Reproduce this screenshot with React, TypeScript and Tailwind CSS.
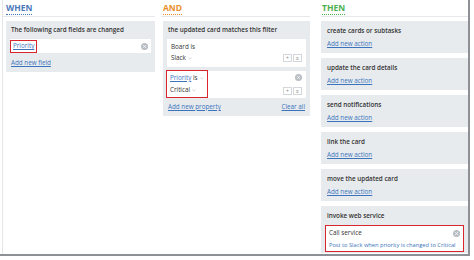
import type { ReactNode } from "react";

const link = "text-[#3b74bd] underline decoration-[0.5px] underline-offset-[1px]";

function ClearIcon({ className = "" }: { className?: string }) {
  return (
    <svg viewBox="0 0 10 10" className={`w-[7px] h-[7px] shrink-0 ${className}`}>
      <circle cx="5" cy="5" r="5" fill="#b9bec4" />
      <path d="M3.2 3.2 L6.8 6.8 M6.8 3.2 L3.2 6.8" stroke="#fff" strokeWidth="1.2" />
    </svg>
  );
}

function Caret() {
  return (
    <svg viewBox="0 0 6 4" className="inline-block w-[4px] h-[3px] ml-[2px] align-middle">
      <path d="M0.5 0.5 L3 3 L5.5 0.5" fill="none" stroke="#b0b4b9" strokeWidth="0.8" />
    </svg>
  );
}

function Header({ label, color, dots, pad }: { label: string; color: string; dots: string; pad: string }) {
  return (
    <div className={`h-[17px] border-b border-[#e6e8eb] pt-[3px] ${pad}`}>
      <div className={`inline-block font-bold text-[8.5px] leading-[10px] ${color}`}>
        {label}
        <div className={`border-b border-dotted ${dots} mt-[1px]`} />
      </div>
    </div>
  );
}

function Box({ title, children }: { title: string; children: ReactNode }) {
  return (
    <div className="bg-[#e8ebee] px-[4px] pt-[5px] pb-[5px]">
      <div className="font-semibold text-[#333] leading-[8px] mb-[5px] px-[1px]">{title}</div>
      {children}
    </div>
  );
}

function SmallBtns() {
  return (
    <div className="flex gap-px">
      <span className="w-[9px] h-[8px] border border-[#d3d7db] bg-white text-[5px] leading-[5px] text-[#888] flex items-center justify-center">+</span>
      <span className="w-[9px] h-[8px] border border-[#d3d7db] bg-white text-[5px] leading-[5px] text-[#888] flex items-center justify-center">≡</span>
    </div>
  );
}

function ActionBox({ title }: { title: string }) {
  return (
    <div className="bg-[#e8ebee] h-[32px] px-[6px] pt-[6px]">
      <div className="text-[#333] font-semibold leading-[8px]">{title}</div>
      <div className={`${link} leading-[8px] mt-[5px]`}>Add new action</div>
    </div>
  );
}

export default function App() {
  return (
    <div
      className="w-[472px] h-[258px] bg-white text-[6.3px] text-[#333] flex"
      style={{ fontFamily: '"Open Sans", "Liberation Sans", sans-serif' }}
    >
      <div className="w-[470px] h-[256px] border-r-2 border-b-2 border-[#8d9196] flex">
        {/* WHEN */}
        <div className="w-[156px] shrink-0 ml-[2px] border-l border-[#e3e5e8] pr-[3px]">
          <Header label="WHEN" color="text-[#4a78bd]" dots="border-[#4a78bd]" pad="px-[3px]" />
          <div className="pl-[3px] pt-[4px]">
            <Box title="The following card fields are changed">
              <div className="bg-white h-[14px] flex items-center justify-between pr-[3px] mb-[6px]">
                <span className={`${link} border border-[#d8262c] px-[2px] h-[13px] flex items-center`}>Priority</span>
                <ClearIcon />
              </div>
              <div className={`${link} leading-[8px] px-[1px]`}>Add new field</div>
            </Box>
          </div>
        </div>

        {/* AND */}
        <div className="w-[155px] shrink-0 ml-[3px] pr-[6px]">
          <Header label="AND" color="text-[#e98f2c]" dots="border-[#e98f2c]" pad="px-[2px]" />
          <div className="pl-[2px] pt-[4px]">
            <Box title="the updated card matches this filter">
              <div className="bg-white h-[28px] px-[4px] pt-[4px] mb-[4px]">
                <div className="leading-[8px]">Board is</div>
                <div className="flex justify-between items-center mt-[3px]">
                  <span className="leading-[8px]">Slack<Caret /></span>
                  <SmallBtns />
                </div>
              </div>
              <div className="bg-white h-[27px] flex mb-[5px]">
                <div className="border border-[#d8262c] w-[42px] -ml-px -mt-px h-[28px] px-[3px] pt-[3px]">
                  <div className="leading-[8px] whitespace-nowrap">
                    <span className={link}>Priority</span> is<Caret />
                  </div>
                  <div className="leading-[8px] mt-[4px] whitespace-nowrap">
                    Critical<Caret />
                  </div>
                </div>
                <div className="flex-1 flex flex-col items-end justify-between pr-[4px] py-[3px]">
                  <ClearIcon />
                  <SmallBtns />
                </div>
              </div>
              <div className="flex justify-between px-[1px]">
                <span className={`${link} leading-[8px]`}>Add new property</span>
                <span className={`${link} leading-[8px]`}>Clear all</span>
              </div>
            </Box>
          </div>
        </div>

        {/* THEN */}
        <div className="flex-1 min-w-0 ml-[5px]">
          <Header label="THEN" color="text-[#4caf50]" dots="border-[#4caf50]" pad="px-[1px]" />
          <div className="pt-[4px] flex flex-col gap-[5px]">
            <ActionBox title="create cards or subtasks" />
            <ActionBox title="update the card details" />
            <ActionBox title="send notifications" />
            <ActionBox title="link the card" />
            <ActionBox title="move the updated card" />
            <div className="bg-[#e8ebee] px-[4px] pt-[6px] h-[47px]">
              <div className="font-semibold leading-[8px] px-[2px]">invoke web service</div>
              <div className="bg-white border border-[#d8262c] mt-[5px] h-[27px] px-[3px] pt-[3px]">
                <div className="flex justify-between items-center leading-[8px]">
                  <span>Call service</span>
                  <ClearIcon />
                </div>
                <div className="text-[#3b74bd] text-[5.7px] leading-[8px] mt-[4px] whitespace-nowrap">
                  Post to Slack when priority is changed to Critical
                </div>
              </div>
            </div>
          </div>
        </div>
      </div>
    </div>
  );
}
